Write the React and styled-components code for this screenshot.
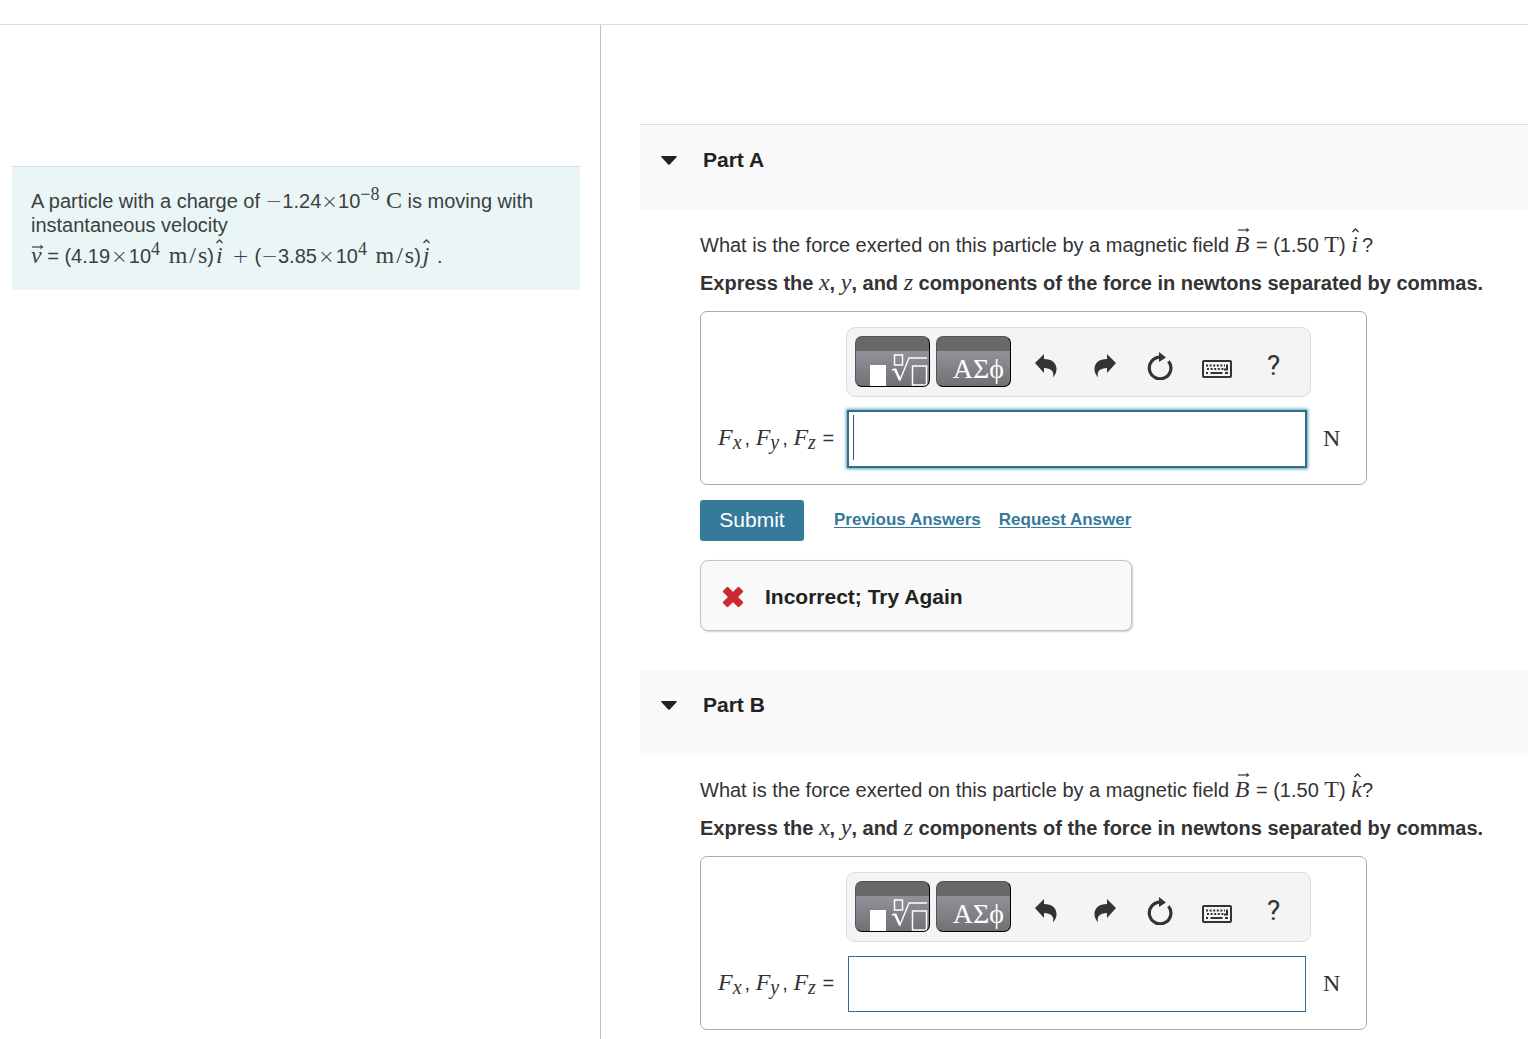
import React, { useState } from "react";
import styled, { createGlobalStyle } from "styled-components";

const sans = `"Liberation Sans", Arial, Helvetica, sans-serif`;
const serif = `"Liberation Serif", "Times New Roman", serif`;

const GlobalStyle = createGlobalStyle`
  *, *::before, *::after { box-sizing: border-box; }
  body { margin: 0; background: #fff; color: #333; font: 20px/24px ${sans}; }
  h2, p { margin: 0; }
`;

const TopBar = styled.header`
  height: 25px;
  border-bottom: 1px solid #ddd;
`;

const Columns = styled.div`
  display: grid;
  grid-template-columns: 601px minmax(0, 1fr);
  min-height: calc(100vh - 25px);
`;

const ProblemPane = styled.aside`
  border-right: 1px solid #bfc3c8;
  padding: 141px 20px 0 12px;
`;

const ProblemCard = styled.section`
  background: #eaf5f6;
  border-top: 1px solid #d3dfe1;
  padding: 22px 19px;
  color: #3b3f40;
`;

const VelocityLine = styled.p`
  margin-top: 7px;
  white-space: nowrap;
`;

const PartsPane = styled.main`
  padding: 99px 0 0 39px;
`;

const PartSection = styled.section`
  &:first-child { border-top: 1px solid #ddd; }
  & + & { margin-top: 39px; }
`;

const PartHeading = styled.h2`
  background: #f9f9f9;
  padding: 23px 21px 38px;
  font-size: 21px;
  line-height: 24px;
`;

const Disclosure = styled.button`
  display: flex;
  align-items: center;
  gap: 26px;
  padding: 0;
  border: 0;
  background: none;
  color: #222;
  font: inherit;
  cursor: pointer;
`;

const PartBody = styled.div`
  padding: 23px 20px 0 60px;
`;

const Instruction = styled.p`
  margin-top: 14px;
  font-weight: bold;
`;

const MathText = styled.span`
  font-family: ${serif};
  font-size: 24px;
  font-style: ${(p) => (p.$upright ? "normal" : "italic")};
  font-weight: normal;
  line-height: 0;
  margin: 0 ${(p) => p.$after || 0}px 0 ${(p) => p.$before || 0}px;
`;

const Operator = styled.span`
  font-family: "DejaVu Sans", sans-serif;
  font-weight: 200;
  line-height: 0;
  margin: 0 ${(p) => p.$space || 0}px;
`;

const Slash = styled.span`
  margin: 0 2px;
`;

const Sup = styled.sup`
  font-family: ${serif};
  font-size: 18px;
  line-height: 0;
  vertical-align: 8px;
`;

const Sub = styled.sub`
  font-size: 20px;
  line-height: 0;
  vertical-align: -4px;
`;

const Accented = styled(MathText)`
  position: relative;
  display: inline-block;
`;

const AccentMark = styled.svg`
  position: absolute;
  left: 50%;
  bottom: ${(p) => p.$rise}px;
  margin-left: -4px;
  fill: none;
  stroke: currentColor;
`;

const AnswerBox = styled.div`
  margin-top: 16px;
  max-width: 667px;
  border: 1px solid #aaa;
  border-radius: 7px;
  padding: 15px 0 17px;
`;

const Toolbar = styled.div`
  display: flex;
  align-items: flex-start;
  margin: 0 55px 0 145px;
  height: 70px;
  padding: 8px;
  border: 1px solid #ddd;
  border-radius: 9px;
  background: #f4f4f4;
`;

const PaletteButton = styled.button`
  display: flex;
  align-items: flex-end;
  justify-content: flex-end;
  width: 75px;
  height: 51px;
  margin-right: 6px;
  padding: 0 ${(p) => p.$inset}px 0 0;
  overflow: hidden;
  border: 1px solid #000;
  border-color: #555 #000 #000 #555;
  border-radius: 7px;
  background: linear-gradient(#68686a 14px, #929299 14px, #707075 100%);
  color: #fff;
  font: 28px/34px ${serif};
`;

const IconButton = styled.button`
  display: flex;
  align-items: center;
  justify-content: center;
  width: 57px;
  height: 60px;
  padding: 0;
  border: 0;
  background: none;
  color: #333;
  font: 28px/32px Roboto, sans-serif;
`;

const FieldRow = styled.div`
  display: grid;
  grid-template-columns: 130px minmax(0, 1fr) 60px;
  align-items: center;
  margin-top: 14px;
  padding-left: 17px;
`;

const FieldLabel = styled.label`
  padding-bottom: 3px;
  white-space: nowrap;
`;

const FieldShell = styled.div`
  position: relative;
  height: 56px;
`;

const AnswerInput = styled.input`
  display: block;
  width: 100%;
  height: 56px;
  border: 1px solid #31708b;
  border-radius: 0;
  outline: 0;
  padding: 0 8px;
  font: 22px ${serif};
  box-shadow: ${(p) => (p.$active ? "0 0 0 1px #31708b, 0 0 3px 2px #5d9bb9" : "none")};
`;

const Caret = styled.span`
  position: absolute;
  left: 5px;
  top: 4px;
  bottom: 7px;
  width: 1px;
  background: #3b4f7c;
`;

const Unit = styled.span`
  padding: 0 0 2px 17px;
  font: 24px/24px ${serif};
`;

const Actions = styled.div`
  display: flex;
  align-items: center;
  gap: 18px;
  margin-top: 15px;
`;

const SubmitButton = styled.button`
  width: 104px;
  height: 41px;
  margin-right: 12px;
  padding: 0 0 2px;
  border: 0;
  border-radius: 3px;
  background: #367a9b;
  color: #fff;
  font: 21px/24px ${sans};
`;

const ActionLink = styled.a`
  color: #367a9b;
  font-size: 17px;
  font-weight: bold;
  margin-bottom: 2px;
  text-underline-offset: 2px;
`;

const Feedback = styled.div`
  display: flex;
  align-items: center;
  gap: 21px;
  max-width: 432px;
  height: 71px;
  margin-top: 19px;
  padding: 3px 21px 0;
  border: 1px solid #c4c4c4;
  border-radius: 8px;
  background: #f9f9f9;
  box-shadow: 1px 1px 2px #ccc;
  color: #222;
  font-size: 21px;
  font-weight: bold;
`;

function Vec({ children, rise, before, after }) {
  return (
    <Accented $before={before} $after={after}>
      {children}
      <AccentMark $rise={rise} width="12" height="6" viewBox="0 0 12 6" aria-hidden="true">
        <path d="M0 3h10" strokeWidth="1.2" />
        <path d="M8 .5 11.5 3 8 5.5 9 3z" fill="currentColor" stroke="none" />
      </AccentMark>
    </Accented>
  );
}

function Hat({ children, before, after }) {
  return (
    <Accented $before={before} $after={after}>
      {children}
      <AccentMark $rise={11} width="8" height="5" viewBox="0 0 8 5" aria-hidden="true">
        <path d="M1.5 4 4.5 1 7.5 4" strokeWidth="1.3" />
      </AccentMark>
    </Accented>
  );
}

const RootIcon = () => (
  <svg width="58" height="32" viewBox="0 0 58 32" fill="none" stroke="#fff" aria-hidden="true">
    <rect x="0" y="11" width="16" height="21" fill="#fff" stroke="none" />
    <rect x="24.5" y="1" width="8" height="10" strokeWidth="1.5" />
    <path d="M22 16l3-1 5 11 9-22h18" strokeWidth="1.4" />
    <path d="M25 15l5 11" strokeWidth="2.6" />
    <rect x="42.5" y="12" width="14" height="19" strokeWidth="1.5" />
  </svg>
);

const UndoIcon = () => (
  <svg width="22" height="24" viewBox="0 0 22 24" fill="currentColor" aria-hidden="true">
    <path d="M0 9 9 0v5c8 0 12.500 4 12.500 10 0 3-1 5.500-3.500 8.500 1.500-6-2-9.500-9-9.500v5z" />
  </svg>
);

const RedoIcon = () => (
  <svg width="26" height="24" viewBox="0 0 26 24" fill="currentColor" aria-hidden="true">
    <path d="M26 9 17 0v5C9 5 4.500 9 4.500 15c0 3 1 5.500 3.500 8.500-1.500-6 2-9.500 9-9.500v5z" />
  </svg>
);

const ResetIcon = () => (
  <svg width="26" height="28" viewBox="0 0 26 28" fill="none" stroke="currentColor" aria-hidden="true">
    <path d="M21.5 9.2A10.8 10.8 0 1 1 13 5.2" strokeWidth="3.2" />
    <path d="M12 0 19 5.5 12 10z" fill="currentColor" stroke="none" />
  </svg>
);

const KeyboardIcon = () => (
  <svg width="30" height="24" viewBox="0 -6 30 24" fill="none" stroke="currentColor" aria-hidden="true">
    <rect x="1" y="1" width="28" height="16" rx="1" strokeWidth="2" />
    <path d="M4 5.5h19M5 9h17" strokeWidth="2" strokeDasharray="2 1.6" />
    <path d="M4 13h2M8.500 13h12M23 13h3M25 4.500V9.500H22" strokeWidth="2" />
  </svg>
);

const CrossIcon = () => (
  <svg width="22" height="22" viewBox="0 0 22 22" aria-hidden="true">
    <path
      d="M5.500 2 11 7.500 16.500 2 20 5.500 14.500 11 20 16.500 16.500 20 11 14.500 5.500 20 2 16.500 7.500 11 2 5.500z"
      fill="#cb2a30"
      stroke="#cb2a30"
      strokeWidth="2.400"
      strokeLinejoin="round"
    />
  </svg>
);

const MetersPerSecond = () => (
  <MathText $upright $before={3}>m<Slash>/</Slash>s</MathText>
);

function Part({ name, id, axis, axisAfter, active, children }) {
  const [open, setOpen] = useState(true);
  return (
    <PartSection>
      <PartHeading>
        <Disclosure type="button" aria-expanded={open} onClick={() => setOpen(!open)}>
          <svg width="16" height="9" viewBox="0 0 16 9" aria-hidden="true">
            <path d="M1 0h14q1.500 0 .5 1.200L9 8.200q-1 1-2 0L.5 1.200Q-.5 0 1 0z" fill="#222" />
          </svg>
          {name}
        </Disclosure>
      </PartHeading>
      {open && (
        <PartBody>
          <p>
            What is the force exerted on this particle by a magnetic field{" "}
            <Vec rise={11} after={1}>B</Vec> = (1.50 <MathText $upright>T</MathText>){" "}
            <Hat after={axisAfter}>{axis}</Hat>?
          </p>
          <Instruction>
            Express the <MathText>x</MathText>, <MathText>y</MathText>, and <MathText>z</MathText>{" "}
            components of the force in newtons separated by commas.
          </Instruction>
          <AnswerBox>
            <Toolbar role="toolbar" aria-label="Equation tools">
              <PaletteButton type="button" aria-label="Templates" $inset={1}><RootIcon /></PaletteButton>
              <PaletteButton type="button" aria-label="Symbols" $inset={6}>ΑΣϕ</PaletteButton>
              <IconButton type="button" aria-label="Undo"><UndoIcon /></IconButton>
              <IconButton type="button" aria-label="Redo"><RedoIcon /></IconButton>
              <IconButton type="button" aria-label="Reset"><ResetIcon /></IconButton>
              <IconButton type="button" aria-label="Keyboard"><KeyboardIcon /></IconButton>
              <IconButton type="button" aria-label="Help">?</IconButton>
            </Toolbar>
            <FieldRow>
              <FieldLabel htmlFor={id}>
                <MathText $after={3}>F<Sub>x</Sub></MathText>,{" "}
                <MathText $after={3}>F<Sub>y</Sub></MathText>,{" "}
                <MathText $after={1}>F<Sub>z</Sub></MathText> =
              </FieldLabel>
              <FieldShell>
                <AnswerInput id={id} type="text" $active={active} />
                {active && <Caret />}
              </FieldShell>
              <Unit>N</Unit>
            </FieldRow>
          </AnswerBox>
          {children}
        </PartBody>
      )}
    </PartSection>
  );
}

export default function App() {
  return (
    <>
      <GlobalStyle />
      <TopBar />
      <Columns>
        <ProblemPane>
          <ProblemCard>
            <p>
              A particle with a charge of <Operator>−</Operator>1.24<Operator>×</Operator>10
              <Sup>−8</Sup> <MathText $upright $before={1}>C</MathText> is moving with instantaneous
              velocity
            </p>
            <VelocityLine>
              <Vec rise={5}>v</Vec> = (4.19<Operator $space={1}>×</Operator>10<Sup>4</Sup>{" "}
              <MetersPerSecond />)<Hat before={2} after={4}>i</Hat>{" "}
              <Operator>+</Operator> (<Operator>−</Operator>3.85<Operator $space={1}>×</Operator>10
              <Sup>4</Sup> <MetersPerSecond />)<Hat before={2} after={2}>j</Hat> .
            </VelocityLine>
          </ProblemCard>
        </ProblemPane>
        <PartsPane>
          <Part name="Part A" id="force-a" axis="i" axisAfter={4} active>
            <Actions>
              <SubmitButton type="button">Submit</SubmitButton>
              <ActionLink href="#previous">Previous Answers</ActionLink>
              <ActionLink href="#request">Request Answer</ActionLink>
            </Actions>
            <Feedback role="status"><CrossIcon />Incorrect; Try Again</Feedback>
          </Part>
          <Part name="Part B" id="force-b" axis="k" axisAfter={0} />
        </PartsPane>
      </Columns>
    </>
  );
}
